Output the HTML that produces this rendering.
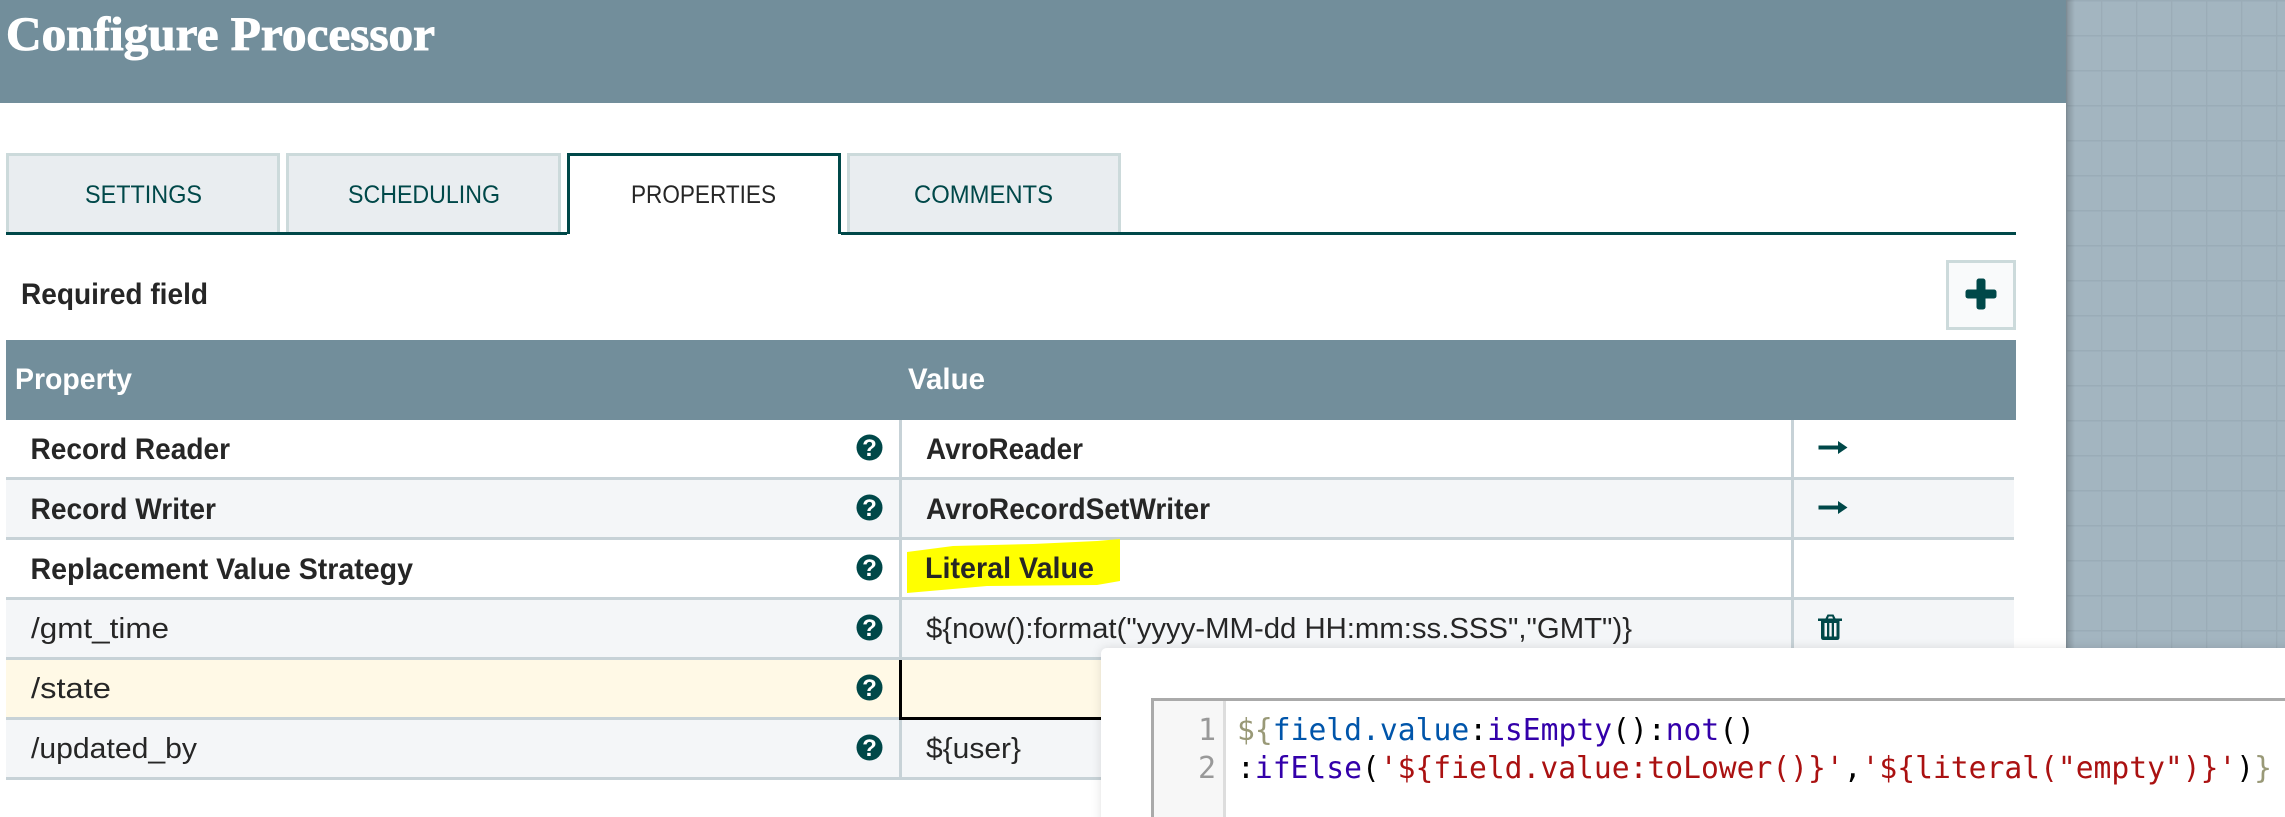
<!DOCTYPE html>
<html lang="en">
<head>
<meta charset="utf-8">
<title>Configure Processor</title>
<style>
html,body{margin:0;padding:0;width:2285px;height:817px;overflow:hidden;background:#fff}
svg{display:block}
.s{font-family:"Liberation Sans",sans-serif}
.b{font-family:"Liberation Sans",sans-serif;font-weight:700}
.m{font-family:"DejaVu Sans Mono","Liberation Mono",monospace;font-size:30px}
</style>
</head>
<body>
<svg xmlns="http://www.w3.org/2000/svg" width="2285" height="817" viewBox="0 0 2285 817">
<defs>
<pattern id="g" x="2101" y="0" width="35" height="35" patternUnits="userSpaceOnUse">
<rect width="35" height="35" fill="#a3b5c0"/>
<rect x="0" y="0" width="35" height="1.500" fill="#9aacb7"/>
<rect x="0" y="0" width="1.300" height="35" fill="#9bacb7"/>
</pattern>
<linearGradient id="sh" x1="0" x2="1" y1="0" y2="0">
<stop offset="0" stop-color="#000" stop-opacity=".2"/>
<stop offset="1" stop-color="#000" stop-opacity="0"/>
</linearGradient>
<filter id="ds" x="-5%" y="-10%" width="110%" height="120%">
<feDropShadow dx="0" dy="0" stdDeviation="5" flood-color="#000" flood-opacity=".12"/>
</filter>
</defs>

<rect width="2285" height="817" fill="#fff"/>
<!-- canvas -->
<rect x="2066" y="0" width="219" height="817" fill="url(#g)"/>
<rect x="2066" y="0" width="9" height="817" fill="url(#sh)"/>
<!-- header -->
<rect x="0" y="0" width="2066" height="103" fill="#728e9b"/>
<text x="6" y="50" font-family="'Liberation Serif',serif" font-weight="700" font-size="48" fill="#fff" stroke="#fff" stroke-width="1" textLength="429" lengthAdjust="spacingAndGlyphs">Configure Processor</text>

<!-- tab rail -->
<rect x="6" y="232" width="2010" height="3" fill="#004849"/>
<!-- tabs -->
<rect x="6" y="153" width="274" height="79" fill="#e9edf0"/>
<path d="M7.500 232V154.500H278.500V232" fill="none" stroke="#ccdadb" stroke-width="3"/>
<rect x="286" y="153" width="275" height="79" fill="#e9edf0"/>
<path d="M287.500 232V154.500H559.500V232" fill="none" stroke="#ccdadb" stroke-width="3"/>
<rect x="567" y="153" width="274" height="82" fill="#fff"/>
<path d="M568.500 234V154.500H839.500V234" fill="none" stroke="#004849" stroke-width="3"/>
<rect x="847" y="153" width="274" height="79" fill="#e9edf0"/>
<path d="M848.500 232V154.500H1119.500V232" fill="none" stroke="#ccdadb" stroke-width="3"/>
<text class="s" x="85" y="203" font-size="25" fill="#004849" textLength="117" lengthAdjust="spacingAndGlyphs">SETTINGS</text>
<text class="s" x="348" y="203" font-size="25" fill="#004849" textLength="152" lengthAdjust="spacingAndGlyphs">SCHEDULING</text>
<text class="s" x="631" y="203" font-size="25" fill="#262626" textLength="145" lengthAdjust="spacingAndGlyphs">PROPERTIES</text>
<text class="s" x="914" y="203" font-size="25" fill="#004849" textLength="139" lengthAdjust="spacingAndGlyphs">COMMENTS</text>

<text class="b" x="21" y="304" font-size="29.500" fill="#262626" textLength="187" lengthAdjust="spacingAndGlyphs">Required field</text>

<!-- add button -->
<rect x="1947.500" y="261.500" width="67" height="67" fill="#f9fafb" stroke="#ccdadb" stroke-width="3"/>
<rect x="1965.500" y="289.500" width="31" height="9" rx="2.500" fill="#004849"/>
<rect x="1976.500" y="278.500" width="9" height="31" rx="2.500" fill="#004849"/>

<!-- table head -->
<rect x="6" y="340" width="2010" height="80" fill="#728e9b"/>
<text class="b" x="15" y="389" font-size="29.500" fill="#fff" textLength="117" lengthAdjust="spacingAndGlyphs">Property</text>
<text class="b" x="908" y="389" font-size="29.500" fill="#fff" textLength="77" lengthAdjust="spacingAndGlyphs">Value</text>

<!-- rows -->
<rect x="6" y="420" width="2008" height="57" fill="#fff"/>
<rect x="6" y="480" width="2008" height="57" fill="#f4f6f8"/>
<rect x="6" y="540" width="2008" height="57" fill="#fff"/>
<rect x="6" y="600" width="2008" height="57" fill="#f4f6f8"/>
<rect x="6" y="660" width="2008" height="57" fill="#fff9e6"/>
<rect x="6" y="720" width="2008" height="57" fill="#f4f6f8"/>
<g fill="#c7d2d7">
<rect x="6" y="477" width="2008" height="3"/>
<rect x="6" y="537" width="2008" height="3"/>
<rect x="6" y="597" width="2008" height="3"/>
<rect x="6" y="657" width="2008" height="3"/>
<rect x="6" y="717" width="2008" height="3"/>
<rect x="6" y="777" width="2008" height="3"/>
<rect x="899" y="420" width="3" height="360"/>
<rect x="1791" y="420" width="3" height="360"/>
</g>
<rect x="899" y="660" width="3" height="60" fill="#000"/>
<rect x="899" y="717" width="300" height="3" fill="#000"/>

<!-- highlight -->
<polygon points="907,552 953,546 1033,544 1097,541 1120,539 1120,581 1097,585 987,586 907,593" fill="#ffff00"/>

<!-- property names -->
<text class="b" x="30.500" y="459" font-size="29.500" fill="#262626" textLength="199.500" lengthAdjust="spacingAndGlyphs">Record Reader</text>
<text class="b" x="30.500" y="519" font-size="29.500" fill="#262626" textLength="185.500" lengthAdjust="spacingAndGlyphs">Record Writer</text>
<text class="b" x="30.500" y="579" font-size="29.500" fill="#262626" textLength="382.500" lengthAdjust="spacingAndGlyphs">Replacement Value Strategy</text>
<text class="s" x="31" y="638" font-size="29" fill="#262626" textLength="138" lengthAdjust="spacingAndGlyphs">/gmt_time</text>
<text class="s" x="31" y="698" font-size="29" fill="#262626" textLength="80" lengthAdjust="spacingAndGlyphs">/state</text>
<text class="s" x="31" y="758" font-size="29" fill="#262626" textLength="166" lengthAdjust="spacingAndGlyphs">/updated_by</text>

<!-- help icons -->
<g fill="#004849">
<circle cx="869.500" cy="447.500" r="13"/><circle cx="869.500" cy="507.500" r="13"/><circle cx="869.500" cy="567.500" r="13"/>
<circle cx="869.500" cy="627.500" r="13"/><circle cx="869.500" cy="687.500" r="13"/><circle cx="869.500" cy="747.500" r="13"/>
</g>
<g font-size="24" fill="#fff" text-anchor="middle">
<text class="b" x="869.500" y="456">?</text><text class="b" x="869.500" y="516">?</text><text class="b" x="869.500" y="576">?</text>
<text class="b" x="869.500" y="636">?</text><text class="b" x="869.500" y="696">?</text><text class="b" x="869.500" y="756">?</text>
</g>

<!-- values -->
<text class="b" x="926" y="459" font-size="29.500" fill="#262626" textLength="157" lengthAdjust="spacingAndGlyphs">AvroReader</text>
<text class="b" x="926" y="519" font-size="29.500" fill="#262626" textLength="284" lengthAdjust="spacingAndGlyphs">AvroRecordSetWriter</text>
<text class="b" x="925" y="578" font-size="29.500" fill="#262626" textLength="169" lengthAdjust="spacingAndGlyphs">Literal Value</text>
<text class="s" x="926" y="638" font-size="29" fill="#262626" textLength="706" lengthAdjust="spacingAndGlyphs">${now():format("yyyy-MM-dd HH:mm:ss.SSS","GMT")}</text>
<text class="s" x="926" y="758" font-size="29" fill="#262626" textLength="95" lengthAdjust="spacingAndGlyphs">${user}</text>

<!-- arrows -->
<g fill="#004849">
<path d="M1818.500 445.500H1838V441L1847.500 447.500L1838 454V449.500H1818.500Z"/>
<path d="M1818.500 505.500H1838V501L1847.500 507.500L1838 514V509.500H1818.500Z"/>
<path fill-rule="evenodd" d="M1818 618.500H1825.500L1827.500 614.500H1833.500L1835.500 618.500H1842V621H1839.500V637.500Q1839.500 640 1837 640H1823.500Q1821 640 1821 637.500V621H1818ZM1828 618.500H1833L1832.200 616.500H1828.800ZM1824.500 623V636.500H1827V623ZM1829.300 623V636.500H1831.700V623ZM1834 623V636.500H1836.500V623Z"/>
</g>

<!-- overlay -->
<rect x="1101" y="648" width="1200" height="200" rx="6" fill="#fff" filter="url(#ds)"/>
<rect x="1151" y="698" width="1134" height="119" fill="#fff"/>
<rect x="1154" y="701" width="69" height="116" fill="#f7f7f7"/>
<rect x="1223" y="701" width="3" height="116" fill="#ddd"/>
<rect x="1151" y="698" width="1134" height="3" fill="#aaa"/>
<rect x="1151" y="698" width="3" height="119" fill="#aaa"/>
<text class="m" x="1216" y="740" fill="#999" text-anchor="end">1</text>
<text class="m" x="1216" y="778" fill="#999" text-anchor="end">2</text>
<text class="m" x="1237" y="740" textLength="518" lengthAdjust="spacingAndGlyphs"><tspan fill="#997">${</tspan><tspan fill="#05a">field.value</tspan><tspan fill="#000">:</tspan><tspan fill="#30a">isEmpty</tspan><tspan fill="#000">():</tspan><tspan fill="#30a">not</tspan><tspan fill="#000">()</tspan></text>
<text class="m" x="1237" y="778" textLength="1035" lengthAdjust="spacingAndGlyphs"><tspan fill="#000">:</tspan><tspan fill="#30a">ifElse</tspan><tspan fill="#000">(</tspan><tspan fill="#a11">'${field.value:toLower()}'</tspan><tspan fill="#000">,</tspan><tspan fill="#a11">'${literal("empty")}'</tspan><tspan fill="#000">)</tspan><tspan fill="#997">}</tspan></text>
</svg>
</body>
</html>
